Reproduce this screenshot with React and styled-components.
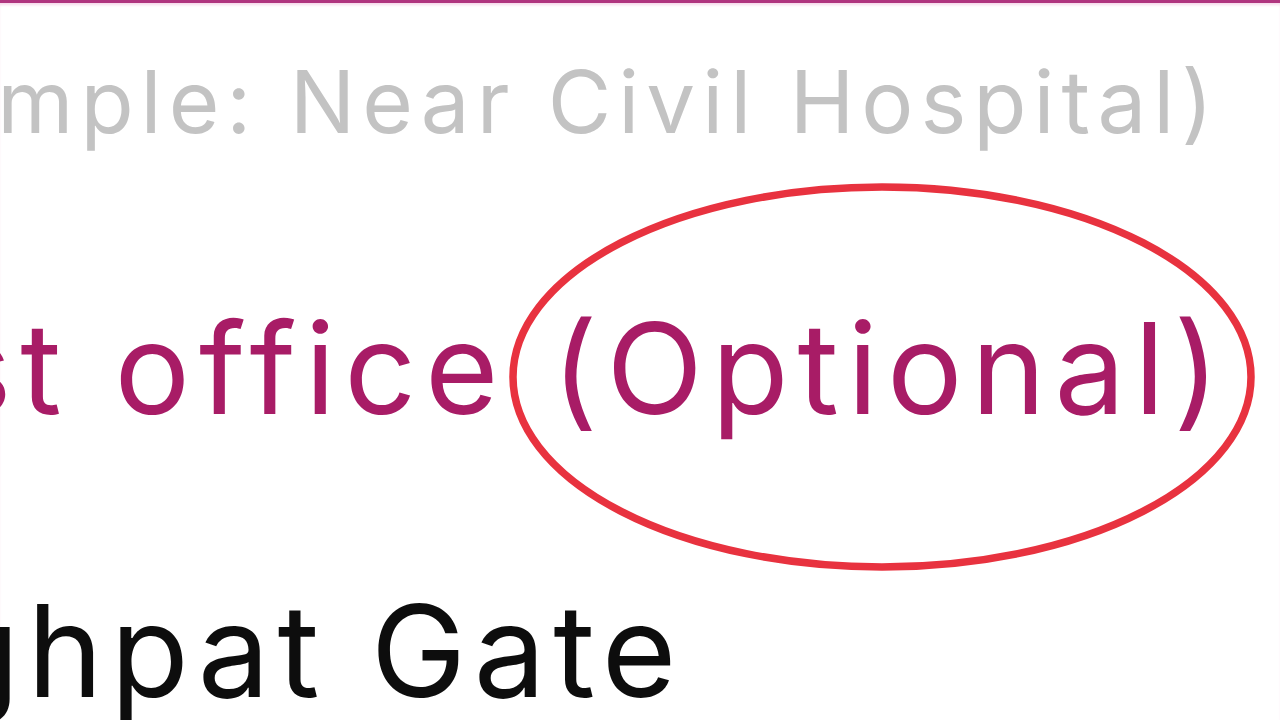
import React from 'react';
import styled, { createGlobalStyle } from 'styled-components';

const Global = createGlobalStyle`
  html, body {
    margin: 0;
    padding: 0;
    background: #ffffff;
  }
`

const Page = styled.div`
  position: relative;
  width: 1280px;
  height: 720px;
  overflow: hidden;
  background: #ffffff;
  border-top: 3px solid #b0357f;
  box-sizing: border-box;
  font-family: Inter, "Liberation Sans", sans-serif;
  box-shadow: inset 0 3px 3px -1px #f6d8ea;
`
// one text row of the zoomed form; shift pushes the start of the text out past the left edge
const Line = styled.div`
  height: ${(p) => p.h}px;
  line-height: ${(p) => p.h}px;
  font-size: ${(p) => p.size}px;
  color: ${(p) => p.color};
  letter-spacing: ${(p) => p.spacing}em;
  margin-left: ${(p) => p.shift}px;
  white-space: nowrap;
`
const Ring = styled.svg`
  position: absolute;
  left: 506px;
  top: 178px;
  width: 752px;
  height: 392px;
  pointer-events: none;
`

const App = () => {
  return (
    <Page>
      <Global />
      <Line h={197} size={87} color="#c3c3c3" spacing={0.08} shift={-211}>
        (Example: Near Civil Hospital)
      </Line>
      <Line h={337} size={126} color="#a81c66" spacing={0.07} shift={-228}>
        Post office (Optional)
      </Line>
      <Line h={227} size={128} color="#0d0d0d" spacing={0.06} shift={-230}>
        Baghpat Gate
      </Line>
      <Ring viewBox="0 0 752 392">
        <ellipse cx="376" cy="196" rx="369" ry="190" fill="none" stroke="#e8323f" strokeWidth="7.5" />
      </Ring>
    </Page>
  )
}

export default App
